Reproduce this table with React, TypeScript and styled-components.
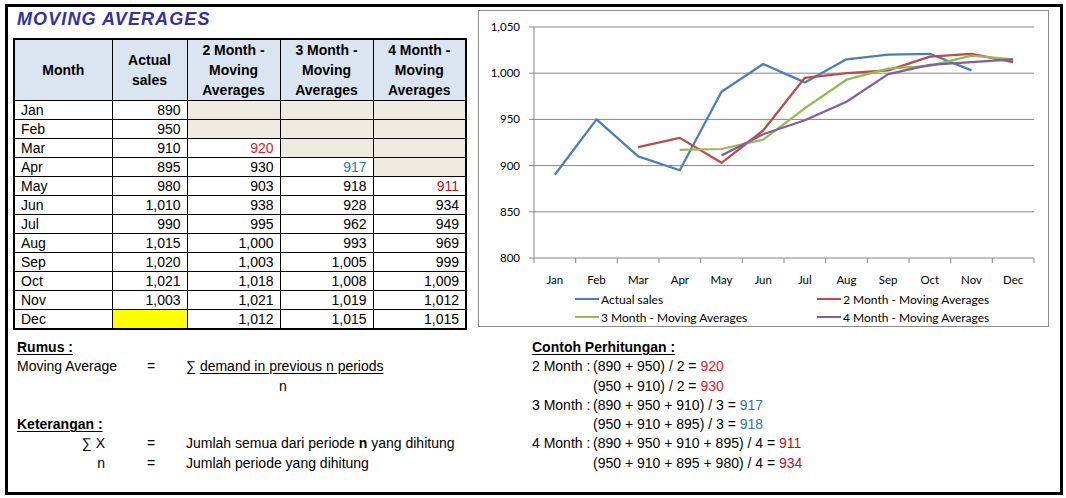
import React from 'react';
import styled, { createGlobalStyle } from 'styled-components';

const GlobalStyle = createGlobalStyle`
  body {
    margin: 0;
    background: #fff;
    font-family: "Liberation Sans", Arial, sans-serif;
    color: #000;
  }
`;

const months = ['Jan', 'Feb', 'Mar', 'Apr', 'May', 'Jun', 'Jul', 'Aug', 'Sep', 'Oct', 'Nov', 'Dec'];

type Tone = 'red' | 'dark' | 'blue';
type Cell = { v?: number; empty?: 'grey' | 'yellow'; tone?: Tone };

const actual = [890, 950, 910, 895, 980, 1010, 990, 1015, 1020, 1021, 1003, null];
const ma2 = [null, null, 920, 930, 903, 938, 995, 1000, 1003, 1018, 1021, 1012];
const ma3 = [null, null, null, 917, 918, 928, 962, 993, 1005, 1008, 1019, 1015];
const ma4 = [null, null, null, null, 911, 934, 949, 969, 999, 1009, 1012, 1015];

const series = [
  { name: 'Actual sales', color: '#4a7ebb', data: actual },
  { name: '2 Month - Moving Averages', color: '#be4b48', data: ma2 },
  { name: '3 Month - Moving Averages', color: '#98b954', data: ma3 },
  { name: '4 Month - Moving Averages', color: '#7d60a0', data: ma4 },
];

const fmt = (n: number) => n.toLocaleString('en-US');

const toneColor: Record<Tone, string> = {
  red: '#e8201e',
  dark: '#c0102a',
  blue: '#2e75b6',
};

const Page = styled.div`
  padding: 4px 0 0 5px;
`;

const Frame = styled.div`
  box-sizing: border-box;
  width: 1058px;
  height: 491px;
  border: 3px solid #000;
  display: flex;
  flex-direction: column;
`;

const TopRow = styled.div`
  display: flex;
  align-items: flex-start;
  padding-left: 5px;
`;

const LeftCol = styled.div`
  display: flex;
  flex-direction: column;
`;

const Title = styled.h1`
  margin: 0;
  height: 31px;
  padding-left: 4px;
  box-sizing: border-box;
  font-size: 18px;
  line-height: 24px;
  font-style: italic;
  font-weight: bold;
  letter-spacing: 1.1px;
  color: #3331a8;
`;

const Table = styled.table`
  border-collapse: collapse;
  table-layout: fixed;
  width: 452px;
  border: 2px solid #000;
  font-size: 14px;
`;

const Th = styled.th`
  background: #dbe5f1;
  border: 1px solid #000;
  height: 60px;
  padding: 0;
  font-weight: bold;
  line-height: 20px;
  text-align: center;
  vertical-align: middle;
`;

const Td = styled.td<{ $fill?: 'grey' | 'yellow'; $tone?: Tone; $left?: boolean }>`
  border: 1px solid #000;
  height: 18px;
  padding: 0 6px 0 6px;
  line-height: 18px;
  text-align: ${(p) => (p.$left ? 'left' : 'right')};
  background: ${(p) => (p.$fill === 'grey' ? '#eeece1' : p.$fill === 'yellow' ? '#ffff00' : '#fff')};
  color: ${(p) => (p.$tone ? toneColor[p.$tone] : '#000')};
  white-space: nowrap;
`;

const ChartBox = styled.div`
  box-sizing: border-box;
  width: 571px;
  height: 317px;
  margin: 3px 0 0 11px;
  border: 1px solid #8c8c8c;
  display: flex;
  flex-direction: column;
`;

const Legend = styled.div`
  display: grid;
  grid-template-columns: 242px 1fr;
  padding-left: 96px;
  font-family: Lato, "Open Sans", sans-serif;
  font-size: 12px;
  color: #000;
`;

const LegendItem = styled.div`
  display: flex;
  align-items: center;
  height: 18px;
  gap: 2px;
`;

const Swatch = styled.span<{ $color: string }>`
  display: inline-block;
  width: 24px;
  height: 2.5px;
  background: ${(p) => p.$color};
`;

const BottomRow = styled.div`
  display: flex;
  padding: 8px 0 0 9px;
  font-size: 14px;
  line-height: 19.3px;
`;

const FormulaCol = styled.div`
  width: 515px;
  display: flex;
  flex-direction: column;
`;

const Heading = styled.div`
  font-weight: bold;
  text-decoration: underline;
  text-underline-offset: 2px;
`;

const FormulaRow = styled.div`
  display: grid;
  grid-template-columns: 130px 39px 1fr;
`;

const Label = styled.span<{ $right?: boolean }>`
  text-align: ${(p) => (p.$right ? 'right' : 'left')};
  padding-right: ${(p) => (p.$right ? '42px' : '0')};
`;

const Under = styled.span`
  text-decoration: underline;
  text-underline-offset: 2px;
`;

const Denominator = styled.span`
  padding-left: 93px;
`;

const Spacer = styled.div`
  height: 19.3px;
`;

const CalcCol = styled.div`
  display: flex;
  flex-direction: column;
`;

const CalcRow = styled.div`
  display: grid;
  grid-template-columns: 61px 1fr;
  white-space: nowrap;
`;

const Value = styled.span<{ $tone: Tone }>`
  color: ${(p) => toneColor[p.$tone]};
`;

const plotLeft = 55;
const plotRight = 555;
const catW = (plotRight - plotLeft) / 12;
const yTop = 16;
const yBottom = 247;
const yOf = (v: number) => yBottom - ((v - 800) * (yBottom - yTop)) / 250;
const xOf = (i: number) => plotLeft + (i + 0.5) * catW;

function Chart() {
  const ticks = [800, 850, 900, 950, 1000, 1050];
  return (
    <svg width={569} height={280} style={{ display: 'block' }}>
      {ticks.map((t) => (
        <g key={t}>
          <line x1={plotLeft - 5} x2={plotRight} y1={yOf(t)} y2={yOf(t)} stroke="#868686" strokeWidth={1} />
          <text
            x={41}
            y={yOf(t) + 4}
            textAnchor="end"
            fontFamily="Lato, 'Open Sans', sans-serif"
            fontSize={11.5}
            fill="#000"
          >
            {fmt(t)}
          </text>
        </g>
      ))}
      <line x1={plotLeft} x2={plotLeft} y1={yTop} y2={yBottom} stroke="#868686" strokeWidth={1} />
      {Array.from({ length: 13 }).map((_, i) => (
        <line
          key={i}
          x1={plotLeft + i * catW}
          x2={plotLeft + i * catW}
          y1={yBottom}
          y2={yBottom + 5}
          stroke="#868686"
          strokeWidth={1}
        />
      ))}
      {months.map((m, i) => (
        <text
          key={m}
          x={xOf(i)}
          y={273}
          textAnchor="middle"
          fontFamily="Lato, 'Open Sans', sans-serif"
          fontSize={11.5}
          fill="#000"
        >
          {m}
        </text>
      ))}
      {series.map((s) => {
        const pts = s.data
          .map((v, i) => (v == null ? null : `${xOf(i).toFixed(1)},${yOf(v).toFixed(1)}`))
          .filter(Boolean)
          .join(' ');
        return (
          <polyline
            key={s.name}
            points={pts}
            fill="none"
            stroke={s.color}
            strokeWidth={2.25}
            strokeLinejoin="round"
          />
        );
      })}
    </svg>
  );
}

const rows: { m: string; cells: Cell[] }[] = months.map((m, i) => {
  const cell = (arr: (number | null)[], tone?: Tone): Cell =>
    arr[i] == null ? { empty: 'grey' } : { v: arr[i] as number, tone };
  return {
    m,
    cells: [
      actual[i] == null ? { empty: 'yellow' } : { v: actual[i] as number },
      cell(ma2, i === 2 ? 'red' : undefined),
      cell(ma3, i === 3 ? 'blue' : undefined),
      cell(ma4, i === 4 ? 'dark' : undefined),
    ],
  };
});

const calcs: { label: string; expr: string; val: number; tone: Tone }[] = [
  { label: '2 Month :', expr: '(890 + 950) / 2 = ', val: 920, tone: 'red' },
  { label: '', expr: '(950 + 910) / 2 = ', val: 930, tone: 'red' },
  { label: '3 Month :', expr: '(890 + 950 + 910) / 3 = ', val: 917, tone: 'blue' },
  { label: '', expr: '(950 + 910 + 895) / 3 = ', val: 918, tone: 'blue' },
  { label: '4 Month :', expr: '(890 + 950 + 910 + 895) / 4 = ', val: 911, tone: 'dark' },
  { label: '', expr: '(950 + 910 + 895 + 980) / 4 = ', val: 934, tone: 'dark' },
];

export default function App() {
  return (
    <Page>
      <GlobalStyle />
      <Frame>
        <TopRow>
          <LeftCol>
            <Title>MOVING AVERAGES</Title>
            <Table>
              <colgroup>
                <col style={{ width: 98 }} />
                <col style={{ width: 75 }} />
                <col style={{ width: 93 }} />
                <col style={{ width: 93 }} />
                <col style={{ width: 93 }} />
              </colgroup>
              <thead>
                <tr>
                  <Th>Month</Th>
                  <Th>
                    Actual
                    <br />
                    sales
                  </Th>
                  {[2, 3, 4].map((n) => (
                    <Th key={n}>
                      {n} Month -
                      <br />
                      Moving
                      <br />
                      Averages
                    </Th>
                  ))}
                </tr>
              </thead>
              <tbody>
                {rows.map((r) => (
                  <tr key={r.m}>
                    <Td $left>{r.m}</Td>
                    {r.cells.map((c, j) => (
                      <Td key={j} $fill={c.empty} $tone={c.tone}>
                        {c.v != null ? fmt(c.v) : ''}
                      </Td>
                    ))}
                  </tr>
                ))}
              </tbody>
            </Table>
          </LeftCol>
          <ChartBox>
            <Chart />
            <Legend>
              {series.map((s) => (
                <LegendItem key={s.name}>
                  <Swatch $color={s.color} />
                  <span>{s.name}</span>
                </LegendItem>
              ))}
            </Legend>
          </ChartBox>
        </TopRow>
        <BottomRow>
          <FormulaCol>
            <Heading>Rumus :</Heading>
            <FormulaRow>
              <Label>Moving Average</Label>
              <span>=</span>
              <span>
                ∑ <Under>demand in previous n periods</Under>
              </span>
            </FormulaRow>
            <FormulaRow>
              <span />
              <span />
              <Denominator>n</Denominator>
            </FormulaRow>
            <Spacer />
            <Heading>Keterangan :</Heading>
            <FormulaRow>
              <Label $right>∑ X</Label>
              <span>=</span>
              <span>
                Jumlah semua dari periode <b>n</b> yang dihitung
              </span>
            </FormulaRow>
            <FormulaRow>
              <Label $right>n</Label>
              <span>=</span>
              <span>Jumlah periode yang dihitung</span>
            </FormulaRow>
          </FormulaCol>
          <CalcCol>
            <Heading>Contoh Perhitungan :</Heading>
            {calcs.map((c, i) => (
              <CalcRow key={i}>
                <span>{c.label}</span>
                <span>
                  {c.expr}
                  <Value $tone={c.tone}>{c.val}</Value>
                </span>
              </CalcRow>
            ))}
          </CalcCol>
        </BottomRow>
      </Frame>
    </Page>
  );
}
